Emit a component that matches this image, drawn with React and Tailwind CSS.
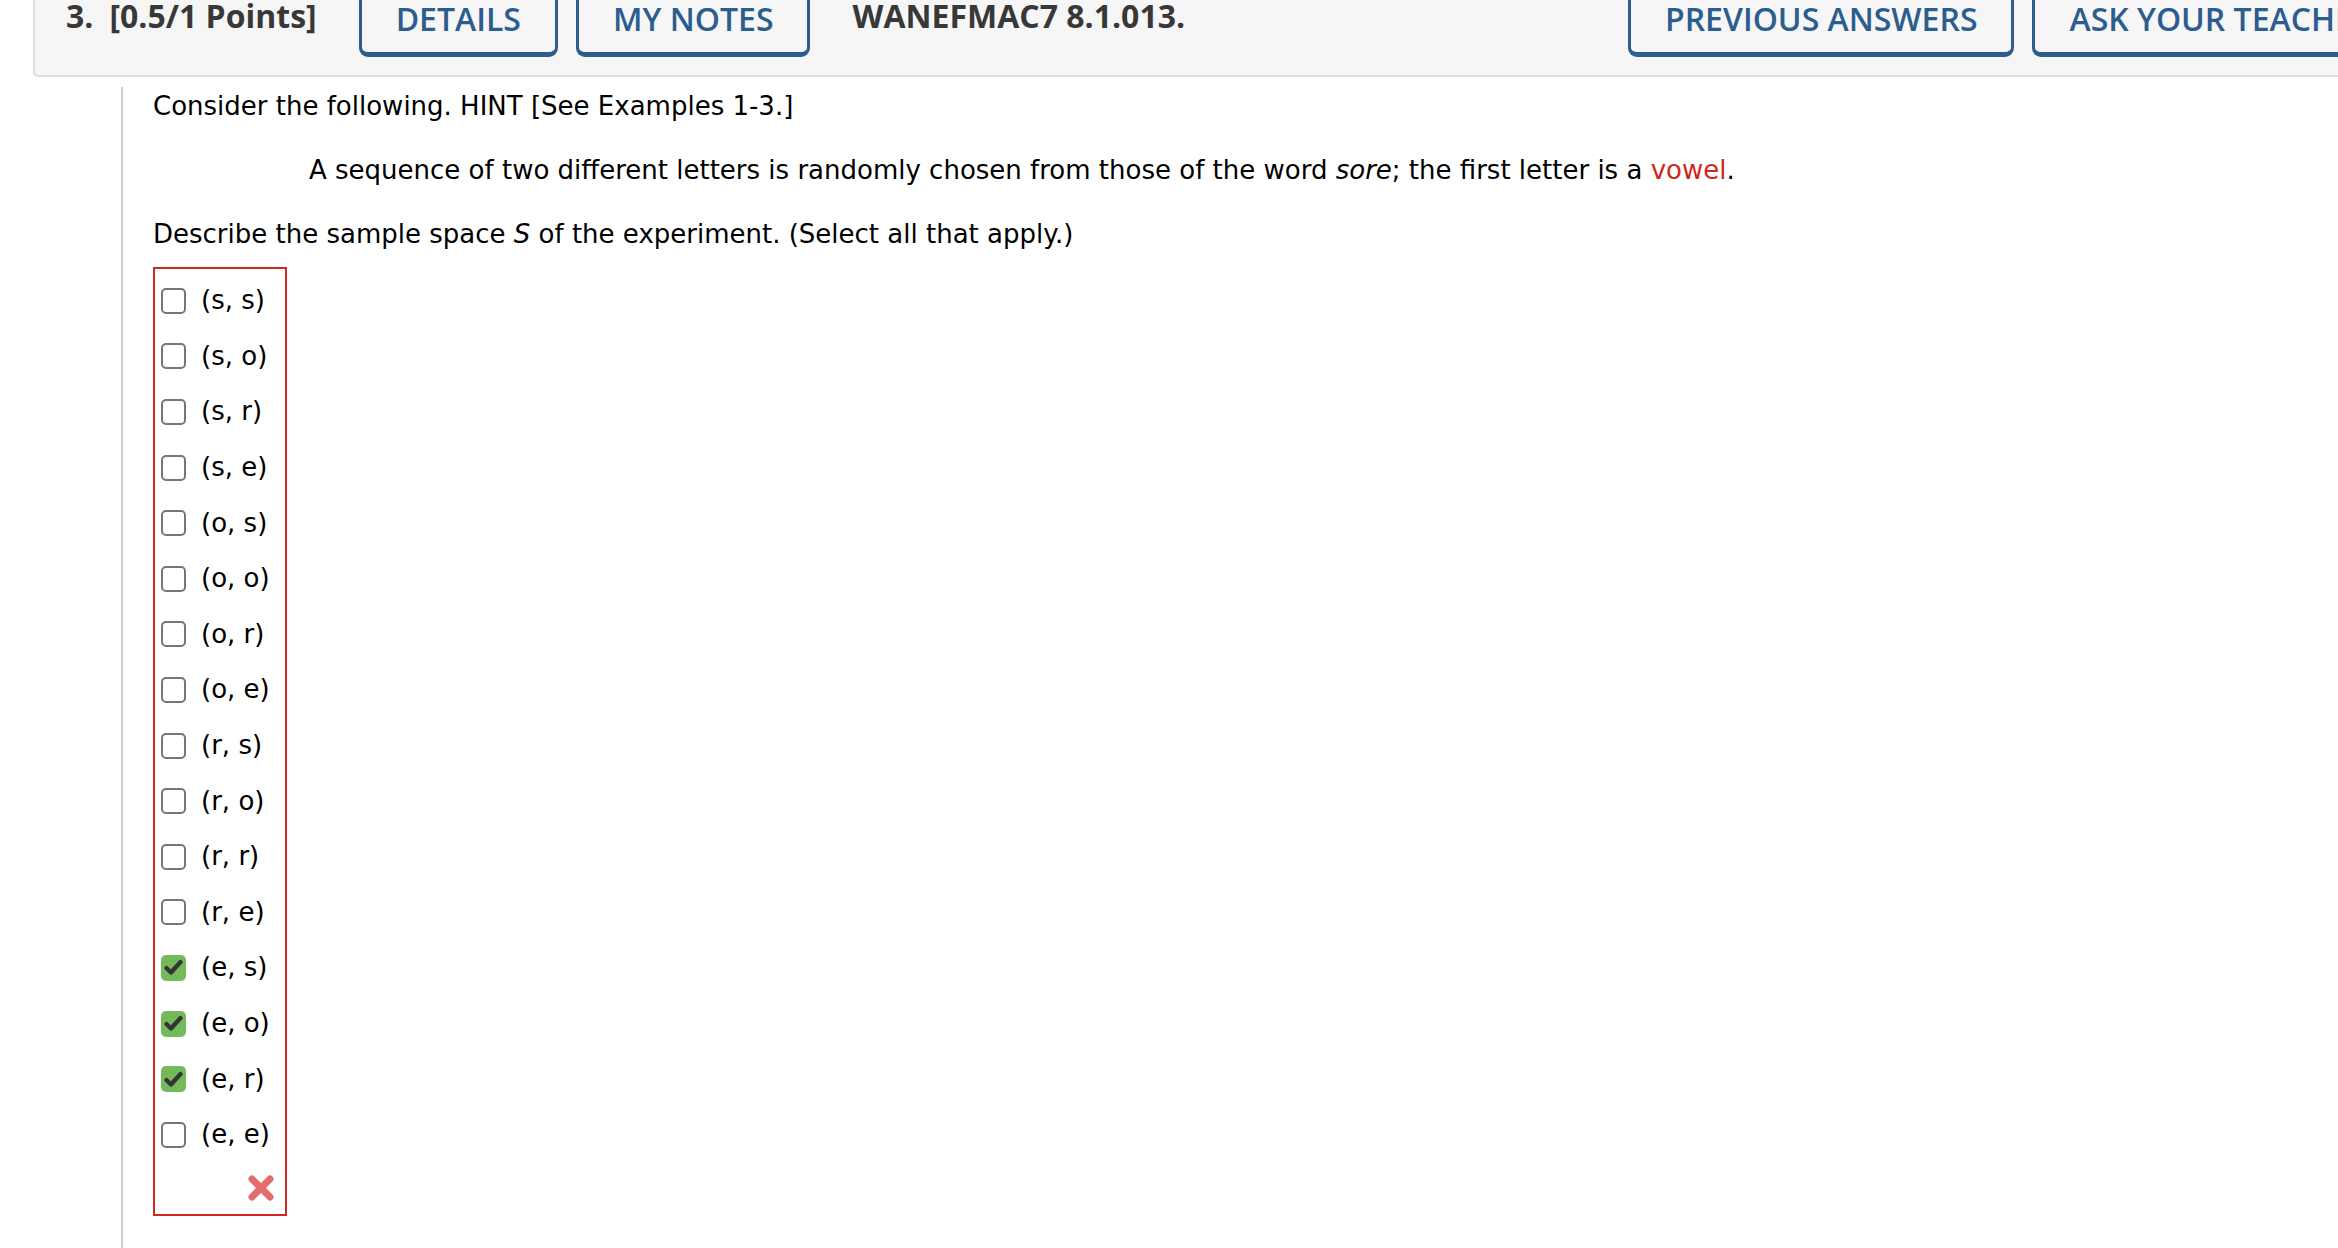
import React from "react";

const options = [
    ["s", "s", false], ["s", "o", false], ["s", "r", false], ["s", "e", false],
    ["o", "s", false], ["o", "o", false], ["o", "r", false], ["o", "e", false],
    ["r", "s", false], ["r", "o", false], ["r", "r", false], ["r", "e", false],
    ["e", "s", true], ["e", "o", true], ["e", "r", true], ["e", "e", false],
];

function HeaderButton({ label }) {
    return (
        <div className="h-[57px] px-[34px] flex items-center border-x-[3px] border-b-[5px] border-[#2c5d8f] rounded-b-[9px] text-[#2c5d8f] font-semibold whitespace-nowrap pb-[15px]">
            {label}
        </div>
    );
}

function Box({ checked }) {
    if (checked) {
        return (
            <div className="w-[25px] h-[26px] rounded-[5px] bg-[#74b95b] flex items-center justify-center shrink-0">
                <svg width="19" height="17" viewBox="0 0 19 17">
                    <path d="M2.5 9 L7 13.5 L16.5 3" fill="none" stroke="#333" strokeWidth="4.2" strokeLinecap="round" strokeLinejoin="round" />
                </svg>
            </div>
        );
    }
    return <div className="w-[25px] h-[26px] rounded-[5px] border-2 border-[#767676] bg-white shrink-0"></div>;
}

export default function App() {
    return (
        <div className="w-[2338px] h-[1248px] bg-white overflow-hidden font-['DejaVu_Sans',Verdana,sans-serif] text-black">

            {/* question header */}
            <div className="ml-[33px] h-[77px] bg-[#f6f6f6] border-l-2 border-b-2 border-[#dedede] rounded-bl-[5px] flex items-start pl-[31px] font-['Open_Sans',sans-serif] text-[32px] leading-none text-[#383838] overflow-hidden">
                <div className="w-[1562px] shrink-0 flex items-start">
                    <div className="flex items-center h-[32px] font-bold whitespace-nowrap">
                        <span>3.</span>
                        <span className="ml-[16px]">[0.5/1 Points]</span>
                    </div>
                    <div className="ml-[42px] flex gap-[18px]">
                        <HeaderButton label="DETAILS" />
                        <HeaderButton label="MY NOTES" />
                    </div>
                    <div className="ml-[42px] flex items-center h-[32px] font-bold whitespace-nowrap">
                        WANEFMAC7 8.1.013.
                    </div>
                </div>
                <div className="flex gap-[18px] shrink-0">
                    <HeaderButton label="PREVIOUS ANSWERS" />
                    <HeaderButton label="ASK YOUR TEACHER" />
                </div>
            </div>

            {/* question body */}
            <div className="ml-[121px] border-l-2 border-[#cfcfcf] h-[1171px] pl-[30px] text-[26px] leading-[39px]">
                <p className="mt-[10px]">Consider the following. HINT [See Examples 1-3.]</p>

                <p className="mt-[25px] pl-[156px]">
                    A sequence of two different letters is randomly chosen from those of the word <i>sore</i>; the first letter is a <span className="text-[#d0281c]">vowel</span>.
                </p>

                <p className="mt-[25px]">
                    Describe the sample space <i>S</i> of the experiment. (Select all that apply.)
                </p>

                <div className="mt-[13px] w-[134px] border-2 border-[#cf2a1d] pt-[4px] pl-[6px]">
                    {options.map(([a, b, checked], i) => (
                        <div key={i} className="h-[55.6px] flex items-center gap-[15px]">
                            <Box checked={checked} />
                            <span className="whitespace-nowrap">({a}, {b})</span>
                        </div>
                    ))}
                    <div className="h-[51px] flex items-center justify-end pr-[10px]">
                        <svg width="28" height="28" viewBox="0 0 28 28">
                            <path d="M5 5 L23 23 M23 5 L5 23" stroke="#e35d5d" strokeWidth="7" strokeLinecap="round" opacity="0.9" />
                        </svg>
                    </div>
                </div>
            </div>
        </div>
    );
}
